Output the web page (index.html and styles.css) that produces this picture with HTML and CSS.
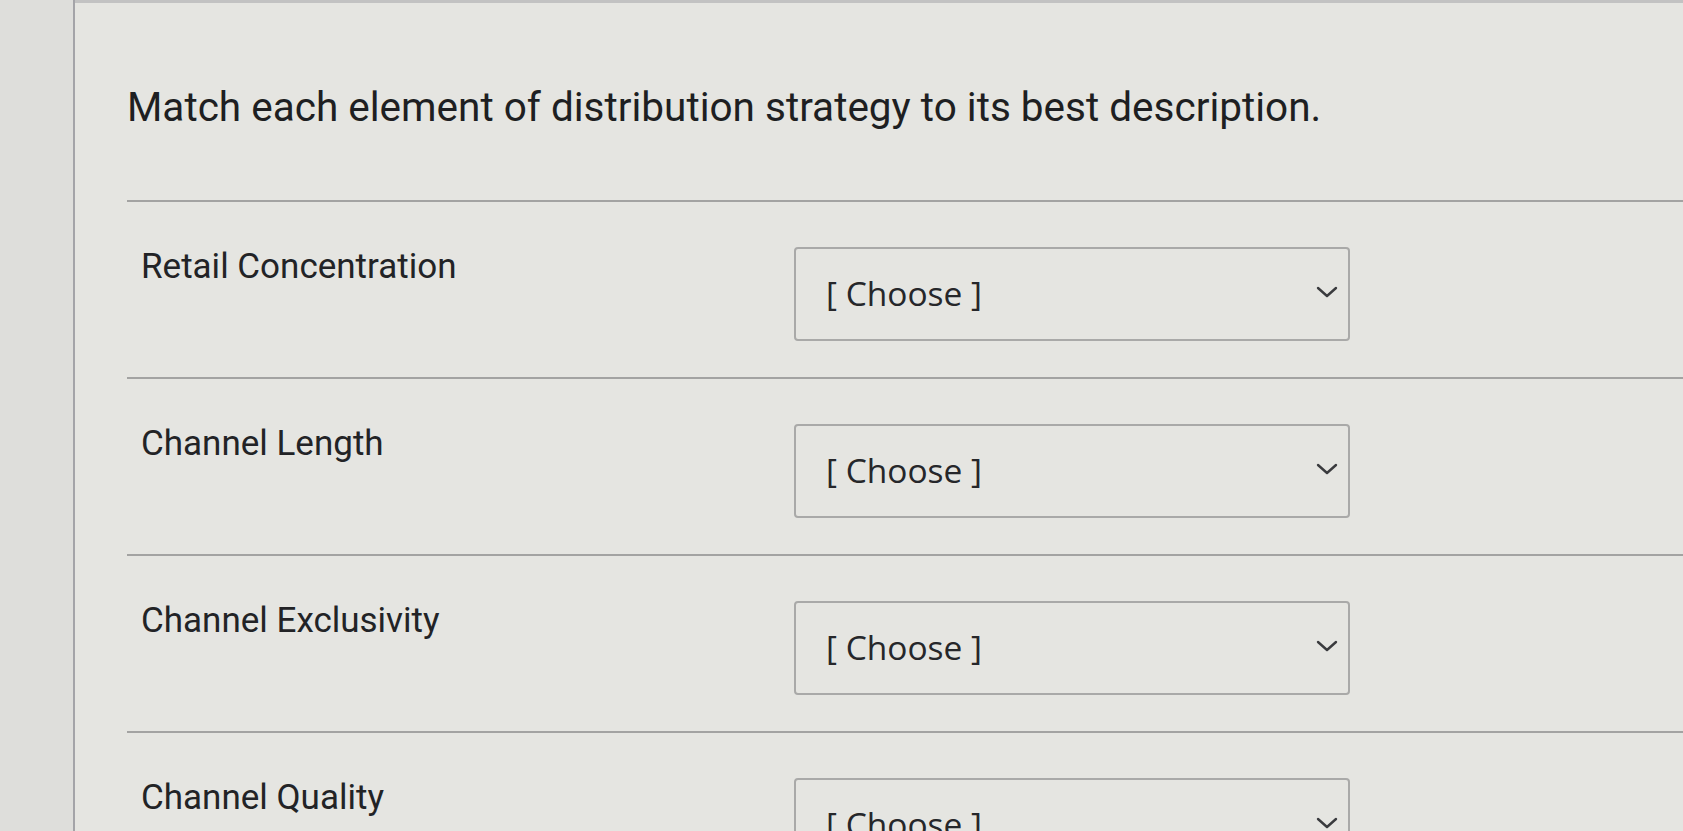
FILE: index.html
```html
<!DOCTYPE html>
<html lang="en">
<head>
<meta charset="utf-8">
<title>Match distribution strategy</title>
<link rel="stylesheet" href="styles.css">
</head>
<body>
<div class="gutter"></div>
<main class="main">
  <h1 class="title">Match each element of distribution strategy to its best description.</h1>
  <div class="rows">
    <div class="row">
      <div class="label">Retail Concentration</div>
      <div class="select"><span class="choose">[ Choose ]</span>
        <svg class="chev" viewBox="0 0 22 12" width="22" height="12"><path d="M2 2 L11 10 L20 2" fill="none" stroke="#3a3b3e" stroke-width="2.4" stroke-linecap="round" stroke-linejoin="round"/></svg>
      </div>
    </div>
    <div class="row">
      <div class="label">Channel Length</div>
      <div class="select"><span class="choose">[ Choose ]</span>
        <svg class="chev" viewBox="0 0 22 12" width="22" height="12"><path d="M2 2 L11 10 L20 2" fill="none" stroke="#3a3b3e" stroke-width="2.4" stroke-linecap="round" stroke-linejoin="round"/></svg>
      </div>
    </div>
    <div class="row">
      <div class="label">Channel Exclusivity</div>
      <div class="select"><span class="choose">[ Choose ]</span>
        <svg class="chev" viewBox="0 0 22 12" width="22" height="12"><path d="M2 2 L11 10 L20 2" fill="none" stroke="#3a3b3e" stroke-width="2.4" stroke-linecap="round" stroke-linejoin="round"/></svg>
      </div>
    </div>
    <div class="row">
      <div class="label">Channel Quality</div>
      <div class="select"><span class="choose">[ Choose ]</span>
        <svg class="chev" viewBox="0 0 22 12" width="22" height="12"><path d="M2 2 L11 10 L20 2" fill="none" stroke="#3a3b3e" stroke-width="2.4" stroke-linecap="round" stroke-linejoin="round"/></svg>
      </div>
    </div>
  </div>
</main>
</body>
</html>
```
FILE: styles.css
```css
html, body {
  margin: 0;
  height: 100%;
}
body {
  display: flex;
  background: #e5e5e1;
  overflow: hidden;
  font-family: Roboto, "Liberation Sans", sans-serif;
  color: #222326;
}
.gutter {
  width: 73px;
  flex: none;
  background: #dededb;
  border-right: 2px solid #a4a4a8;
}
.main {
  flex: 1;
  padding-left: 52px;
  border-top: 3px solid #c2c2c2;
}
.title {
  margin: 0;
  padding: 79px 0 0 0;
  height: 118px;
  font-weight: 400;
  font-size: 40.5px;
  line-height: 50px;
  color: #1e1f22;
}
.rows {
  display: flex;
  flex-direction: column;
}
.row {
  display: flex;
  align-items: flex-start;
  border-top: 2px solid #a3a3a2;
  padding: 45px 0 36px 14px;
}
.label {
  width: 653px;
  flex: none;
  font-size: 35px;
  line-height: 40px;
  margin-top: 0;
}
.select {
  border: 2px solid #a9a9a8;
  border-radius: 4px;
  display: flex;
  align-items: center;
  justify-content: space-between;
  padding: 0 10px 0 30px;
  box-sizing: border-box;
  height: 94px;
  width: 556px;
}
.choose {
  font-family: "Open Sans", sans-serif;
  font-size: 33.5px;
  color: #26272a;
  margin-top: -2px;
}
.chev {
  display: block;
  margin-top: -4px;
}
```
